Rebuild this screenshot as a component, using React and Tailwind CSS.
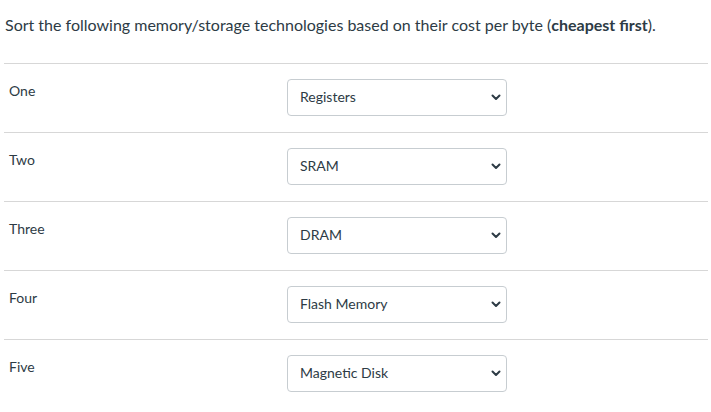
import React from 'react';

const rows = [
  { label: 'One', value: 'Registers' },
  { label: 'Two', value: 'SRAM' },
  { label: 'Three', value: 'DRAM' },
  { label: 'Four', value: 'Flash Memory' },
  { label: 'Five', value: 'Magnetic Disk' },
];

const Chevron = () => (
  <svg width="10" height="7" viewBox="0 0 10 7" className="shrink-0">
    <path d="M1.5 1.5 L5 5 L8.5 1.5" fill="none" stroke="#2d3b45" strokeWidth="2" strokeLinecap="round" strokeLinejoin="round" />
  </svg>
);

const App = () => {
  return (
    <div className="bg-white min-h-screen w-[711px] h-[412px] overflow-hidden px-[4px] text-[#2d3b45]" style={{ fontFamily: 'Lato, "Liberation Sans", sans-serif' }}>
      <p className="pt-[13px] pl-[1px] text-[16px] leading-[24px] h-[63px]">
        Sort the following memory/storage technologies based on their cost per byte (<strong className="font-bold">cheapest first</strong>).
      </p>

      <div className="w-[704px]">
        {rows.map((row) => (
          <div key={row.label} className="flex border-t border-[#d7d7d7] h-[69px]">
            <div className="w-[283px] pl-[5px] pt-[17px] text-[14px] leading-[20px]">{row.label}</div>
            <div className="mt-[15px] w-[220px] h-[37px] border border-[#c7cdd1] rounded-[4px] flex items-center justify-between pl-[12px] pr-[5px] text-[14px]">
              <span className="-mt-[3px]">{row.value}</span>
              <Chevron />
            </div>
          </div>
        ))}
      </div>
    </div>
  );
};

export default App;
